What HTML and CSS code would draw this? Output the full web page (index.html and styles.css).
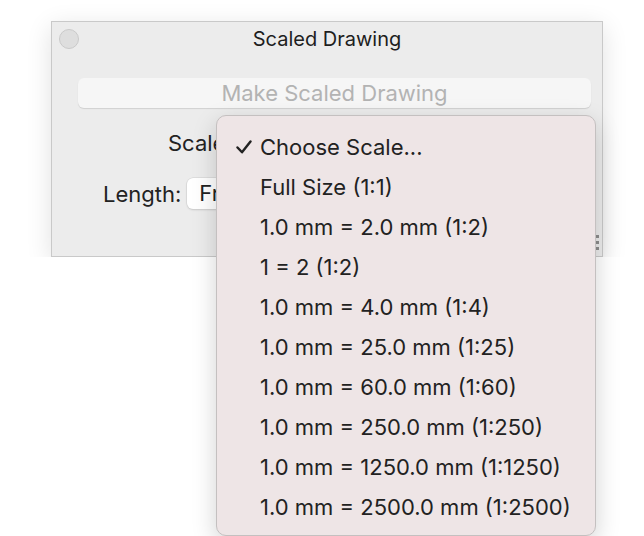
FILE: index.html
```html
<!DOCTYPE html>
<html lang="en">
<head>
  <meta charset="UTF-8" />
  <title>Scaled Drawing</title>
  <link rel="stylesheet" href="styles.css">
</head>
<body>
  <div class="window">
    <div class="titlebar">
      <span class="close-btn"></span>
      <span class="title">Scaled Drawing</span>
    </div>
    <div class="make-btn">Make Scaled Drawing</div>
    <div class="row row-scale">
      <label class="field-label">Scale</label>
    </div>
    <div class="row row-length">
      <label class="field-label">Length:</label>
      <div class="popup">Fr</div>
    </div>
    <div class="grip"><i></i><i></i><i></i></div>
  </div>

  <ul class="menu">
    <li class="checked">
      <svg class="check" width="16" height="14" viewBox="0 0 16 14">
        <path d="M1.5 7.5 L6 12.3 L14.5 1.5" fill="none" stroke="#222" stroke-width="2.4" stroke-linecap="round" stroke-linejoin="round"/>
      </svg>Choose Scale...</li>
    <li>Full Size (1:1)</li>
    <li>1.0 mm = 2.0 mm (1:2)</li>
    <li>1 = 2 (1:2)</li>
    <li>1.0 mm = 4.0 mm (1:4)</li>
    <li>1.0 mm = 25.0 mm (1:25)</li>
    <li>1.0 mm = 60.0 mm (1:60)</li>
    <li>1.0 mm = 250.0 mm (1:250)</li>
    <li>1.0 mm = 1250.0 mm (1:1250)</li>
    <li>1.0 mm = 2500.0 mm (1:2500)</li>
  </ul>
</body>
</html>
```

FILE: styles.css
```css
body {
  margin: 0;
  padding: 21px 0 0 51px;
  background: #fff;
  font-family: Inter, 'Liberation Sans', Arial, sans-serif;
  color: #222;
  overflow: hidden;
}

.window {
  position: relative;
  box-sizing: border-box;
  width: 552px;
  height: 236px;
  background: #ececec;
  border: 1px solid #c9c9c9;
  box-shadow: 0 6px 24px rgba(0, 0, 0, 0.12);
}

.titlebar {
  display: flex;
  align-items: center;
  height: 36px;
  position: relative;
}

.close-btn {
  position: absolute;
  left: 7px;
  top: 7px;
  width: 20px;
  height: 20px;
  border-radius: 50%;
  box-sizing: border-box;
  background: #dedede;
  border: 1px solid #cacaca;
}

.title {
  flex: 1;
  text-align: center;
  font-size: 20px;
  margin-top: -2px;
  color: #1e1e1e;
}

.make-btn {
  margin: 20px 11px 0 26px;
  height: 30px;
  border-radius: 6px;
  background: #f6f6f6;
  box-shadow: 0 1px 1px rgba(0, 0, 0, 0.12);
  color: #b3b3b3;
  font-size: 22px;
  line-height: 30px;
  text-align: center;
}

.row {
  display: flex;
  align-items: center;
}

.row-scale {
  margin-top: 22px;
  padding-left: 116px;
  height: 26px;
}

.row-length {
  margin-top: 22px;
  padding-left: 51px;
  height: 31px;
}

.field-label {
  font-size: 22px;
}

.popup {
  margin-left: 6px;
  width: 60px;
  height: 31px;
  box-sizing: border-box;
  padding-left: 12px;
  border-radius: 6px;
  background: #fff;
  box-shadow: 0 0 0 0.5px #d0d0d0, 0 1px 2px rgba(0, 0, 0, 0.15);
  font-size: 22px;
  line-height: 31px;
}

.grip {
  position: absolute;
  right: 3px;
  bottom: 6px;
  display: flex;
  flex-direction: column;
  gap: 3px;
}

.grip i {
  display: block;
  width: 3px;
  height: 3px;
  background: #8e8e8e;
}

.menu {
  position: absolute;
  left: 216px;
  top: 115px;
  width: 380px;
  height: 421px;
  box-sizing: border-box;
  margin: 0;
  padding: 11px 0 0;
  list-style: none;
  background: #eee5e6;
  border: 1px solid #c4c0c0;
  border-radius: 10px;
  box-shadow: 0 8px 24px rgba(0, 0, 0, 0.18);
}

.menu li {
  position: relative;
  height: 40px;
  line-height: 40px;
  padding-left: 43px;
  font-size: 22px;
  color: #222;
  white-space: nowrap;
}

.check {
  position: absolute;
  left: 19px;
  top: 13px;
}
```
